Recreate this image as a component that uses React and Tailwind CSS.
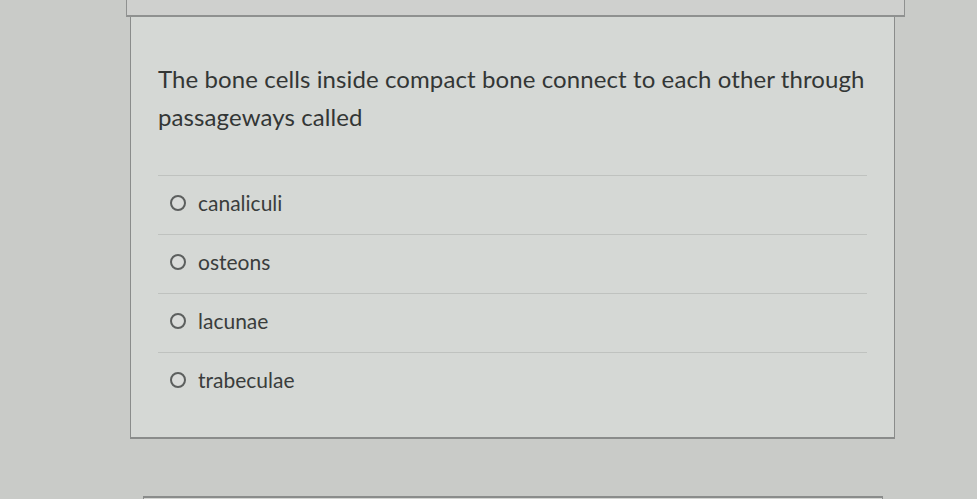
import React, { useState } from 'react';

const options = ['canaliculi', 'osteons', 'lacunae', 'trabeculae'];

const Radio = ({ checked }) => (
    <span className="w-[16px] h-[16px] rounded-full border-2 border-[#5c5f5e] bg-[#dadcda] flex items-center justify-center shrink-0">
        {checked && <span className="w-[8px] h-[8px] rounded-full bg-[#3c3f3e]" />}
    </span>
);

const App = () => {
    const [selected, setSelected] = useState(null);

    return (
        <div
            className="w-[977px] h-[499px] overflow-hidden bg-[#c9cbc8] flex flex-col"
            style={{ fontFamily: 'Lato, "Open Sans", sans-serif' }}
        >
            {/* previous question card, cut off at top */}
            <div className="shrink-0 ml-[126px] w-[779px] h-[17px] bg-[#cfd0ce] border-x border-b-2 border-[#8f9190]" />

            {/* current question */}
            <div className="shrink-0 ml-[130px] w-[765px] h-[422px] bg-[#d5d8d5] border border-[#8a8c8b] border-t-0 border-b-2 px-[27px] pt-[43px]">
                <p className="text-[24px] leading-[38px] text-[#333635] tracking-[0.1px]">
                    The bone cells inside compact bone connect to each other through passageways called
                </p>

                <div className="mt-[39px]">
                    {options.map(opt => (
                        <label
                            key={opt}
                            onClick={() => setSelected(opt)}
                            className="flex items-center gap-[12px] h-[59px] pb-[5px] pl-[12px] border-t border-[#bfc2bf] cursor-pointer"
                        >
                            <Radio checked={selected === opt} />
                            <span className="text-[21px] text-[#3a3d3c] leading-none">{opt}</span>
                        </label>
                    ))}
                </div>
            </div>

            {/* next card peeking in at the bottom */}
            <div className="shrink-0 mt-[57px] ml-[143px] w-[740px] h-[10px] border-t-2 border-x border-[#8a8c8b] bg-[#d3d5d2]" />
        </div>
    );
};

export default App;
